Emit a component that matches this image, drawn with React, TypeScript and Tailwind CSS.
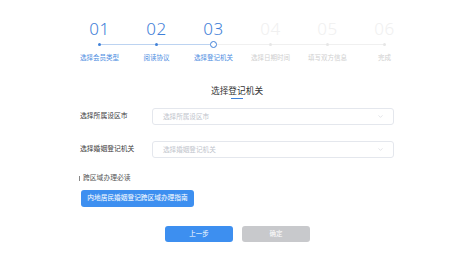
import { ChevronDown } from 'lucide-react';

const STEPS = [
  { no: '01', label: '选择会员类型' },
  { no: '02', label: '阅读协议' },
  { no: '03', label: '选择登记机关' },
  { no: '04', label: '选择日期时间' },
  { no: '05', label: '填写双方信息' },
  { no: '06', label: '完成' },
];

const CURRENT = 2;

const Stepper = () => (
  <div className="grid grid-cols-[repeat(6,57px)] pl-[71px] pt-[20px]">
    {STEPS.map((step, i) => {
      const done = i <= CURRENT;
      return (
        <div key={step.no} className="flex flex-col items-center">
          <div
            className={`text-[17px] font-light leading-[18px] tracking-[0.5px] ${done ? 'text-[#3f80d8]' : 'text-[#f0f0f0]'}`}
          >
            {step.no}
          </div>
          <div className="flex items-center w-full h-[8px] mt-[2px]">
            <div
              className={`flex-1 h-px ${i === 0 ? 'bg-transparent' : done ? 'bg-[#bcd3f1]' : 'bg-[#f0f0f0]'}`}
            />
            {i === CURRENT ? (
              <div className="w-[7px] h-[7px] rounded-full border-[1.5px] border-[#3f80d8] bg-white" />
            ) : (
              <div className={`w-[3px] h-[3px] rounded-full ${done ? 'bg-[#3f80d8]' : 'bg-[#e6e6e6]'}`} />
            )}
            <div
              className={`flex-1 h-px ${i === STEPS.length - 1 ? 'bg-transparent' : i < CURRENT ? 'bg-[#bcd3f1]' : 'bg-[#f0f0f0]'}`}
            />
          </div>
          <div className={`mt-[6px] text-[6.5px] leading-[8px] ${done ? 'text-[#4d8ddf]' : 'text-[#cfcfcf]'}`}>
            {step.label}
          </div>
        </div>
      );
    })}
  </div>
);

const SelectRow = ({ label, placeholder }: { label: string; placeholder: string }) => (
  <div className="flex items-center">
    <div className="w-[72px] text-[6.8px] text-[#3a3a3a]">{label}</div>
    <div className="flex items-center justify-between w-[242px] h-[17px] border border-[#e4e7ed] rounded-[3px] pl-[10px] pr-[9px]">
      <span className="text-[6.6px] text-[#c0c4cc]">{placeholder}</span>
      <ChevronDown size={7} strokeWidth={1.5} className="text-[#c0c4cc]" />
    </div>
  </div>
);

export default function App() {
  return (
    <div className="w-[474px] h-[256px] bg-white overflow-hidden font-['Noto_Sans','Noto_Sans_CJK_SC',sans-serif]">
      <Stepper />

      {/* Title */}
      <div className="flex flex-col items-center mt-[24px]">
        <div className="text-[8.7px] leading-[10px] text-[#333]">选择登记机关</div>
        <div className="w-[12px] h-px bg-[#3f80d8] mt-[2px]" />
      </div>

      {/* Form */}
      <div className="flex flex-col gap-[16px] pl-[80px] mt-[9px]">
        <SelectRow label="选择所属设区市" placeholder="选择所属设区市" />
        <SelectRow label="选择婚姻登记机关" placeholder="选择婚姻登记机关" />
      </div>

      {/* Cross-region */}
      <div className="pl-[79px] mt-[16px]">
        <div className="flex items-center gap-[3px] text-[6.8px] leading-[8px] text-[#555]">
          <span className="w-px h-[5px] bg-[#888]" />
          跨区域办理必读
        </div>
        <button className="mt-[3px] ml-[2px] w-[113px] h-[17px] rounded-[3px] bg-[#3d8ff0] text-white text-[6.7px]">
          内地居民婚姻登记跨区域办理指南
        </button>
      </div>

      {/* Actions */}
      <div className="flex gap-[9px] pl-[165px] mt-[19px]">
        <button className="w-[68px] h-[16px] rounded-[3px] bg-[#3d8ff0] text-white text-[6.5px]">上一步</button>
        <button className="w-[68px] h-[16px] rounded-[3px] bg-[#c8c9cc] text-white text-[6.5px]">确定</button>
      </div>
    </div>
  );
}
